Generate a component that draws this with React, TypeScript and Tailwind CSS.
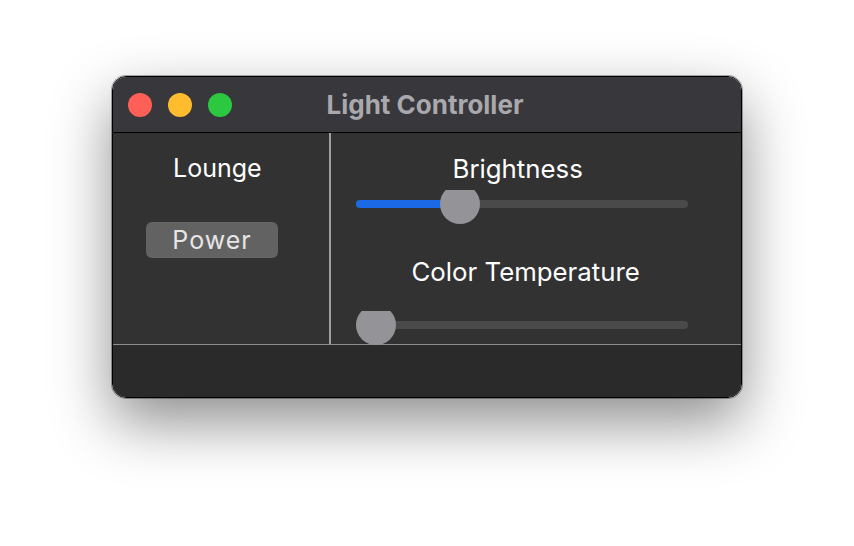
import React from 'react';

function Slider({ value, fill }: { value: number; fill?: boolean }) {
  // value is the thumb centre, in px from the track's left end
  return (
    <div className="relative h-[34px] w-[332px] overflow-hidden">
      <div className="absolute left-0 right-0 top-[10px] h-[8px] rounded-full bg-[#4a4a4a]" />
      {fill && (
        <div
          className="absolute left-0 top-[10px] h-[8px] rounded-full bg-[#1b69e4]"
          style={{ width: value }}
        />
      )}
      <div
        className="absolute top-[-6px] h-[40px] w-[40px] rounded-full bg-[#949398]"
        style={{ left: value - 20 }}
      />
    </div>
  );
}

export default function App() {
  return (
    <div className="min-h-screen bg-white pt-[76px] font-['Inter','Liberation_Sans',sans-serif]">
      <div className="mx-auto flex h-[322px] w-[630px] flex-col overflow-hidden rounded-[14px] border border-black shadow-[0_24px_60px_rgba(0,0,0,0.45),0_0_0_1px_rgba(120,120,120,0.6)]">
        {/* Title bar */}
        <div className="relative flex h-[56px] shrink-0 items-center gap-[16px] border-b border-black bg-[#38373c] pl-[15px]">
          <span className="h-[24px] w-[24px] rounded-full bg-[#fe5f57]" />
          <span className="h-[24px] w-[24px] rounded-full bg-[#febc2e]" />
          <span className="h-[24px] w-[24px] rounded-full bg-[#2bc840]" />
          <div className="pointer-events-none absolute inset-0 flex items-center justify-center pr-[4px]">
            <span className="text-[26px] font-bold leading-[30px] text-[#a9a8ad]">Light Controller</span>
          </div>
        </div>

        {/* Content */}
        <div className="flex h-[211px] shrink-0 bg-[#323232]">
          <div className="flex w-[216px] flex-col">
            <div className="ml-[60px] mt-[21px] h-[28px] text-[25px] leading-[28px] text-white">Lounge</div>
            <button className="ml-[33px] mt-[40px] h-[36px] w-[132px] rounded-[6px] bg-[#626262] text-[25px] leading-[28px] tracking-[0.04em] text-[#e6e6e6]">
              Power
            </button>
          </div>
          <div className="w-[1.5px] bg-[#a0a0a0]" />
          <div className="flex flex-1 flex-col pl-[25px]">
            <div className="ml-[97px] mt-[22px] h-[28px] text-[25.8px] leading-[28px] text-white">Brightness</div>
            <div className="mt-[7px]">
              <Slider value={104} fill />
            </div>
            <div className="ml-[56px] mt-[34px] h-[28px] text-[25.8px] leading-[28px] text-white">Color Temperature</div>
            <div className="mt-[25px]">
              <Slider value={20} />
            </div>
          </div>
        </div>

        {/* Bottom bar */}
        <div className="flex-1 border-t border-[#8c8c8c] bg-[#2a2a2a]" />
      </div>
    </div>
  );
}
